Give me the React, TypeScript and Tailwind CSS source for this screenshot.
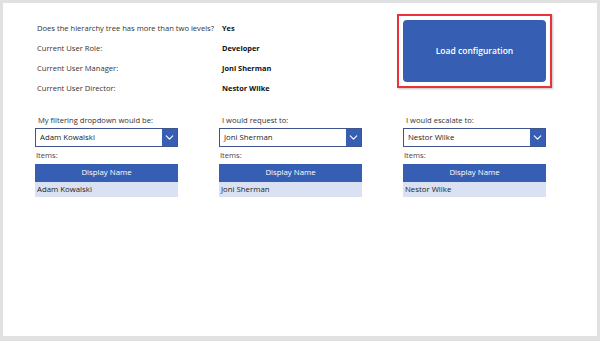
import { ChevronDown } from "lucide-react";

type Picker = {
  label: string;
  value: string;
};

const infoRows = [
  { label: "Does the hierarchy tree has more than two levels?", value: "Yes" },
  { label: "Current User Role:", value: "Developer" },
  { label: "Current User Manager:", value: "Joni Sherman" },
  { label: "Current User Director:", value: "Nestor Wilke" },
];

const pickers: Picker[] = [
  { label: "My filtering dropdown would be:", value: "Adam Kowalski" },
  { label: "I would request to:", value: "Joni Sherman" },
  { label: "I would escalate to:", value: "Nestor Wilke" },
];

function PickerColumn({ label, value }: Picker) {
  return (
    <div className="flex flex-col">
      <div className="flex h-[14px] items-center whitespace-nowrap pl-[3px] text-[7.6px] text-[#333333]">{label}</div>
      <div className="flex h-[19px] items-stretch border border-[#3f548c] bg-white">
        <div className="flex flex-1 items-center pl-[4px] text-[7.8px] text-[#222222]">{value}</div>
        <div className="flex w-[15px] items-center justify-center bg-[#365fb4] text-white">
          <ChevronDown size={13} strokeWidth={2} />
        </div>
      </div>
      <div className="flex h-[17px] items-center pl-[1px] text-[7.6px] text-[#444444]">Items:</div>
      <div className="flex h-[18px] items-center justify-center bg-[#365fb4] text-[7.8px] text-white">
        Display Name
      </div>
      <div className="flex h-[15px] items-center bg-[#d9e1f2] pl-[2px] text-[7.8px] text-[#222222]">{value}</div>
    </div>
  );
}

export default function App() {
  return (
    <div
      className="h-[341px] w-[600px] bg-[#e1e1e1] pl-[3px] pt-[3px]"
      style={{ fontFamily: '"Open Sans", "Liberation Sans", sans-serif' }}
    >
      <div className="h-[333px] w-[594px] bg-white pl-[32px] pt-[16px]">
        <div className="grid grid-cols-[143px_143px_143px] gap-x-[41px]">
          <div className="col-span-2 flex flex-col">
            {infoRows.map((row) => (
              <div key={row.label} className="grid h-[20px] grid-cols-[184px_1fr] items-center">
                <span className="whitespace-nowrap pl-[2px] text-[7.6px] text-[#333333]">{row.label}</span>
                <span className="pl-[3px] text-[7.4px] font-bold text-[#111111]">{row.value}</span>
              </div>
            ))}
          </div>
          <div className="relative mt-[1px] h-[62px]">
            <div className="absolute -inset-[6px] border-2 border-[#e8333b] shadow-[1px_1px_2px_rgba(0,0,0,0.25)]" />
            <button
              type="button"
              className="relative flex h-full w-full items-center justify-center rounded-[4px] bg-[#365fb4] text-[8.5px] font-semibold text-white"
            >
              Load configuration
            </button>
          </div>
        </div>

        <div className="mt-[15px] grid grid-cols-[143px_143px_143px] gap-x-[41px]">
          {pickers.map((p) => (
            <PickerColumn key={p.label} {...p} />
          ))}
        </div>
      </div>
    </div>
  );
}
